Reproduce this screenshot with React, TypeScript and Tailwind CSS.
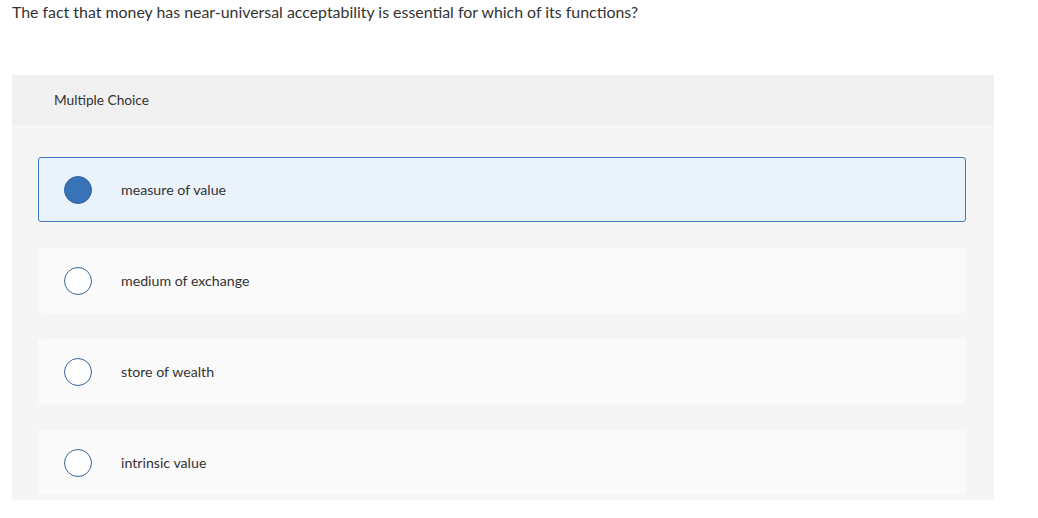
const options = [
  { label: "measure of value", selected: true },
  { label: "medium of exchange", selected: false },
  { label: "store of wealth", selected: false },
  { label: "intrinsic value", selected: false },
];

export default function App() {
  return (
    <div className="w-[1038px] h-[518px] bg-white font-['Lato','Liberation_Sans',sans-serif] text-[#333]">
      <p className="pl-[12px] pt-[2px] text-[15.9px] leading-[20px]">
        The fact that money has near-universal acceptability is essential for which of its functions?
      </p>

      <div className="ml-[12px] mt-[53px] w-[982px] h-[425px] bg-[#f5f5f5]">
        <div className="h-[50px] bg-[#f0f0f0] pl-[42px] flex items-center text-[13.7px]">
          Multiple Choice
        </div>

        <div className="pl-[26px] pr-[28px] pt-[32px] flex flex-col gap-[26px]">
          {options.map((opt) => (
            <div
              key={opt.label}
              className={`h-[65px] rounded-[3px] flex items-center pl-[25px] ${
                opt.selected
                  ? "bg-[#eaf2fb] border border-[#3b78c0]"
                  : "bg-[#fafafa] border border-transparent"
              }`}
            >
              {opt.selected ? (
                <div className="w-[28px] h-[28px] rounded-full bg-[#3873b8] border border-[#2e62a0] shrink-0" />
              ) : (
                <div className="w-[28px] h-[28px] rounded-full bg-white border-[1.5px] border-[#3a6694] shrink-0" />
              )}
              <span className="ml-[29px] pt-[1px] text-[14.2px]">{opt.label}</span>
            </div>
          ))}
        </div>
      </div>
    </div>
  );
}
